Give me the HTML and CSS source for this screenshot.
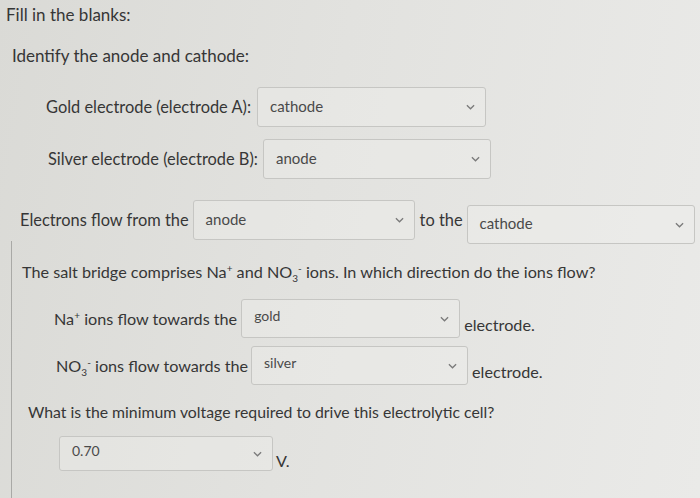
FILE: index.html
```html
<!DOCTYPE html>
<html>
<head>
<meta charset="utf-8">
<link rel="stylesheet" href="styles.css">
</head>
<body>
<div class="page">
  <p class="title">Fill in the blanks:</p>
  <p class="subtitle">Identify the anode and cathode:</p>

  <div class="row row-gold">
    <span class="label">Gold electrode (electrode A):</span>
    <div class="select w-gold"><span class="val">cathode</span><svg class="chev" viewBox="0 0 10 6"><polyline points="1,1 5,5 9,1"/></svg></div>
  </div>

  <div class="row row-silver">
    <span class="label">Silver electrode (electrode B):</span>
    <div class="select w-silver"><span class="val">anode</span><svg class="chev" viewBox="0 0 10 6"><polyline points="1,1 5,5 9,1"/></svg></div>
  </div>

  <div class="row row-electrons">
    <span class="label">Electrons flow from the</span>
    <div class="select w-from"><span class="val">anode</span><svg class="chev" viewBox="0 0 10 6"><polyline points="1,1 5,5 9,1"/></svg></div>
    <span class="label to-the">to the</span>
    <div class="select w-to shifted"><span class="val">cathode</span><svg class="chev" viewBox="0 0 10 6"><polyline points="1,1 5,5 9,1"/></svg></div>
  </div>

  <div class="section">
    <p class="question q-salt">The salt bridge comprises Na<sup>+</sup> and NO<sub>3</sub><sup>-</sup> ions. In which direction do the ions flow?</p>

    <div class="row row-na">
      <span class="label">Na<sup>+</sup> ions flow towards the</span>
      <div class="select w-na"><span class="val small">gold</span><svg class="chev" viewBox="0 0 10 6"><polyline points="1,1 5,5 9,1"/></svg></div>
      <span class="label after">electrode.</span>
    </div>

    <div class="row row-no3">
      <span class="label">NO<sub>3</sub><sup>-</sup> ions flow towards the</span>
      <div class="select w-no3"><span class="val small">silver</span><svg class="chev" viewBox="0 0 10 6"><polyline points="1,1 5,5 9,1"/></svg></div>
      <span class="label after">electrode.</span>
    </div>

    <p class="question q-volt">What is the minimum voltage required to drive this electrolytic cell?</p>

    <div class="row row-volt">
      <div class="select w-volt short"><span class="val small">0.70</span><svg class="chev" viewBox="0 0 10 6"><polyline points="1,1 5,5 9,1"/></svg></div>
      <span class="label after volt-unit">V.</span>
    </div>
  </div>
</div>
</body>
</html>
```

FILE: styles.css
```css
html, body {
  margin: 0;
  padding: 0;
  height: 100%;
}
body {
  background: linear-gradient(100deg, #dadad6 0%, #e2e2df 45%, #eaeae8 100%);
  font-family: Lato, "Open Sans", sans-serif;
  color: #363636;
  font-size: 16.4px;
  overflow: hidden;
}
.page {
  width: 700px;
  height: 498px;
  display: flex;
  flex-direction: column;
  overflow: hidden;
}
p {
  margin: 0;
  line-height: 20px;
}
.title {
  padding: 5px 0 0 6px;
  font-size: 17px;
}
.subtitle {
  margin: 21px 0 0 12px;
  font-size: 17px;
}
.row {
  display: flex;
  align-items: center;
}
.label {
  line-height: 20px;
  white-space: nowrap;
}
sup, sub {
  font-size: 10px;
  line-height: 0;
}
.select {
  box-sizing: border-box;
  height: 40px;
  border: 1px solid #c6c6c3;
  border-radius: 3px;
  background: rgba(240, 240, 238, 0.35);
  display: flex;
  align-items: center;
  justify-content: space-between;
  padding: 0 10px 0 12px;
  margin-left: 5px;
}
.select.short {
  height: 35px;
}
.val {
  font-size: 15px;
  color: #4a4a4a;
  margin-top: -3px;
}
.val.small {
  font-size: 14px;
  margin-top: -6px;
}
.chev {
  width: 9px;
  height: 6px;
  fill: none;
  stroke: #7a7a7a;
  stroke-width: 1.4;
}
.row-gold {
  margin: 21px 0 0 46px;
}
.w-gold { width: 229px; margin-left: 6px; }
.row-silver {
  margin: 12px 0 0 48px;
}
.w-silver { width: 228px; }
.row-electrons {
  margin: 21px 0 0 20px;
  align-items: flex-start;
}
.row-electrons .label {
  margin-top: 10px;
}
.w-from { width: 222px; margin-left: 4px; }
.to-the {
  margin: 15px 0 0 5px;
}
.w-to { width: 228px; margin-left: 4px; }
.shifted { margin-top: 5px; height: 39px; }
.section {
  margin: -3px 0 0 11px;
  border-left: 1px solid #a9a9a6;
  padding-top: 21px;
  flex: 1;
  font-size: 16.2px;
}
.q-salt {
  margin-left: 10px;
}
.row-na {
  margin: 17px 0 0 42px;
  height: 39px;
}
.w-na { width: 219px; height: 39px; margin-left: 4px; }
.after {
  margin-left: 4px;
  margin-top: 12px;
}
.row-no3 {
  margin: 8px 0 0 44px;
}
.w-no3 { width: 217px; height: 39px; margin-left: 3px; }
.q-volt {
  margin: 17px 0 0 16px;
  font-size: 15.8px;
}
.row-volt {
  margin: 14px 0 0 47px;
}
.w-volt { width: 214px; margin-left: 0; }
.volt-unit {
  margin-left: 3px;
  margin-top: 14px;
}
```
